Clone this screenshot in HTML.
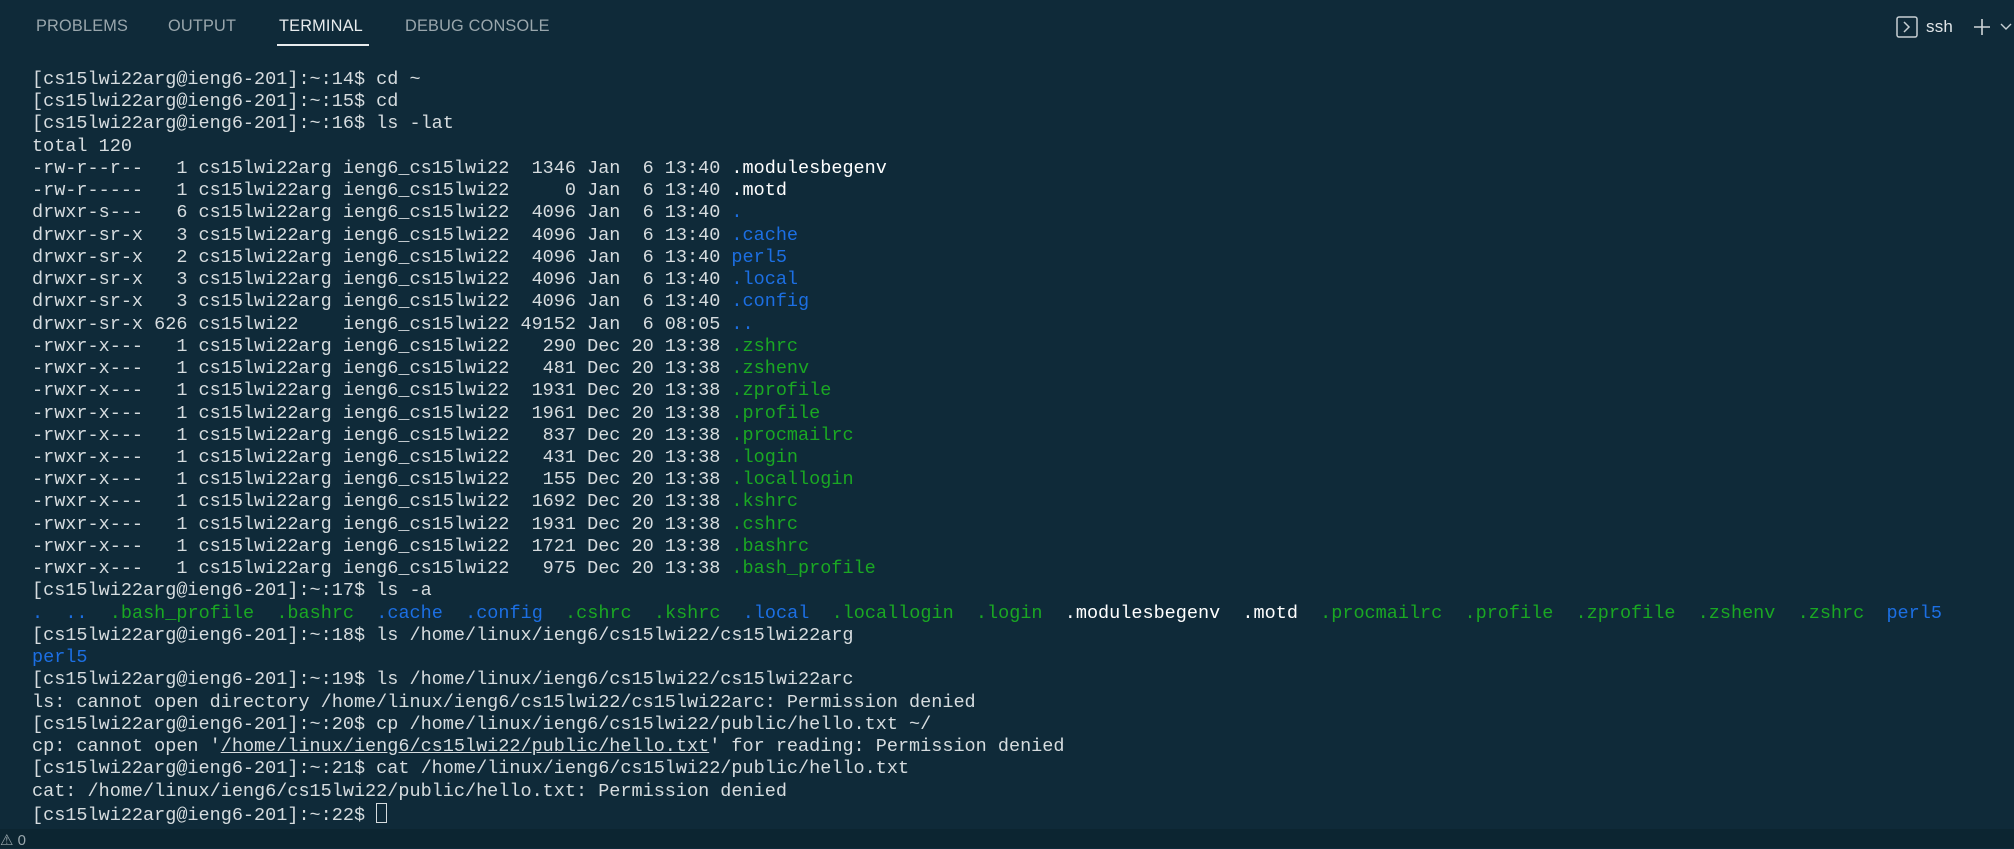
<!DOCTYPE html>
<html><head><meta charset="utf-8"><style>
html,body{margin:0;padding:0;width:2014px;height:848px;overflow:hidden;background:#0f2a39;}
.tabs{position:absolute;top:0;left:0;width:2014px;height:60px;font-family:"Liberation Sans",sans-serif;font-size:16.3px;color:#9aa7ad;}
.tabs span{position:absolute;top:17px;letter-spacing:0.2px}
.ul{position:absolute;left:277px;top:44px;width:92px;height:2px;background:#e8ecee}
pre{position:absolute;left:32px;top:69px;margin:0;font-family:"Liberation Mono",monospace;font-size:18.5px;line-height:22.23px;color:#d6dcdf;}
.b{color:#1c6fe3}.g{color:#1aa823}.w{color:#ffffff}
.status{position:absolute;left:0;top:829px;width:2014px;height:19px;background:#0c2531;font-family:"Liberation Sans",sans-serif;font-size:15px;color:#9aa7ad}
.cur{display:inline-block;width:9px;height:18px;border:1.5px solid #d6dcdf;vertical-align:-3px}
u{text-decoration:underline}
</style></head><body>
<div class="tabs">
<span style="left:36px">PROBLEMS</span>
<span style="left:168px">OUTPUT</span>
<span style="left:279px;color:#e8ecee">TERMINAL</span>
<span style="left:405px">DEBUG CONSOLE</span>
<div class="ul"></div>
<svg style="position:absolute;left:1896px;top:16px" width="22" height="22" viewBox="0 0 22 22"><rect x="1" y="1" width="20" height="20" rx="2" fill="none" stroke="#c8d0d4" stroke-width="1.5"/><path d="M8 6l5 5-5 5" fill="none" stroke="#c8d0d4" stroke-width="1.5"/></svg>
<span style="left:1926px;top:17px;color:#e0e5e8;font-size:17px">ssh</span>
<svg style="position:absolute;left:1972px;top:17px" width="20" height="20" viewBox="0 0 20 20"><path d="M10 2v16M2 10h16" stroke="#d0d6d9" stroke-width="1.6"/></svg>
<svg style="position:absolute;left:2000px;top:22px" width="14" height="10" viewBox="0 0 14 10"><path d="M1 2l5 5 5-5" fill="none" stroke="#c8d0d4" stroke-width="1.4"/></svg>
</div>
<pre>[cs15lwi22arg@ieng6-201]:~:14$ cd ~
[cs15lwi22arg@ieng6-201]:~:15$ cd
[cs15lwi22arg@ieng6-201]:~:16$ ls -lat
total 120
-rw-r--r--   1 cs15lwi22arg ieng6_cs15lwi22  1346 Jan  6 13:40 <span class="w">.modulesbegenv</span>
-rw-r-----   1 cs15lwi22arg ieng6_cs15lwi22     0 Jan  6 13:40 <span class="w">.motd</span>
drwxr-s---   6 cs15lwi22arg ieng6_cs15lwi22  4096 Jan  6 13:40 <span class="b">.</span>
drwxr-sr-x   3 cs15lwi22arg ieng6_cs15lwi22  4096 Jan  6 13:40 <span class="b">.cache</span>
drwxr-sr-x   2 cs15lwi22arg ieng6_cs15lwi22  4096 Jan  6 13:40 <span class="b">perl5</span>
drwxr-sr-x   3 cs15lwi22arg ieng6_cs15lwi22  4096 Jan  6 13:40 <span class="b">.local</span>
drwxr-sr-x   3 cs15lwi22arg ieng6_cs15lwi22  4096 Jan  6 13:40 <span class="b">.config</span>
drwxr-sr-x 626 cs15lwi22    ieng6_cs15lwi22 49152 Jan  6 08:05 <span class="b">..</span>
-rwxr-x---   1 cs15lwi22arg ieng6_cs15lwi22   290 Dec 20 13:38 <span class="g">.zshrc</span>
-rwxr-x---   1 cs15lwi22arg ieng6_cs15lwi22   481 Dec 20 13:38 <span class="g">.zshenv</span>
-rwxr-x---   1 cs15lwi22arg ieng6_cs15lwi22  1931 Dec 20 13:38 <span class="g">.zprofile</span>
-rwxr-x---   1 cs15lwi22arg ieng6_cs15lwi22  1961 Dec 20 13:38 <span class="g">.profile</span>
-rwxr-x---   1 cs15lwi22arg ieng6_cs15lwi22   837 Dec 20 13:38 <span class="g">.procmailrc</span>
-rwxr-x---   1 cs15lwi22arg ieng6_cs15lwi22   431 Dec 20 13:38 <span class="g">.login</span>
-rwxr-x---   1 cs15lwi22arg ieng6_cs15lwi22   155 Dec 20 13:38 <span class="g">.locallogin</span>
-rwxr-x---   1 cs15lwi22arg ieng6_cs15lwi22  1692 Dec 20 13:38 <span class="g">.kshrc</span>
-rwxr-x---   1 cs15lwi22arg ieng6_cs15lwi22  1931 Dec 20 13:38 <span class="g">.cshrc</span>
-rwxr-x---   1 cs15lwi22arg ieng6_cs15lwi22  1721 Dec 20 13:38 <span class="g">.bashrc</span>
-rwxr-x---   1 cs15lwi22arg ieng6_cs15lwi22   975 Dec 20 13:38 <span class="g">.bash_profile</span>
[cs15lwi22arg@ieng6-201]:~:17$ ls -a
<span class="b">.</span>  <span class="b">..</span>  <span class="g">.bash_profile</span>  <span class="g">.bashrc</span>  <span class="b">.cache</span>  <span class="b">.config</span>  <span class="g">.cshrc</span>  <span class="g">.kshrc</span>  <span class="b">.local</span>  <span class="g">.locallogin</span>  <span class="g">.login</span>  <span class="w">.modulesbegenv</span>  <span class="w">.motd</span>  <span class="g">.procmailrc</span>  <span class="g">.profile</span>  <span class="g">.zprofile</span>  <span class="g">.zshenv</span>  <span class="g">.zshrc</span>  <span class="b">perl5</span>
[cs15lwi22arg@ieng6-201]:~:18$ ls /home/linux/ieng6/cs15lwi22/cs15lwi22arg
<span class="b">perl5</span>
[cs15lwi22arg@ieng6-201]:~:19$ ls /home/linux/ieng6/cs15lwi22/cs15lwi22arc
ls: cannot open directory /home/linux/ieng6/cs15lwi22/cs15lwi22arc: Permission denied
[cs15lwi22arg@ieng6-201]:~:20$ cp /home/linux/ieng6/cs15lwi22/public/hello.txt ~/
cp: cannot open '<u>/home/linux/ieng6/cs15lwi22/public/hello.txt</u>' for reading: Permission denied
[cs15lwi22arg@ieng6-201]:~:21$ cat /home/linux/ieng6/cs15lwi22/public/hello.txt
cat: /home/linux/ieng6/cs15lwi22/public/hello.txt: Permission denied
[cs15lwi22arg@ieng6-201]:~:22$ <span class="cur"></span></pre>
<div class="status"><span style="position:absolute;left:0;top:2px">⚠ 0</span></div>
</body></html>
